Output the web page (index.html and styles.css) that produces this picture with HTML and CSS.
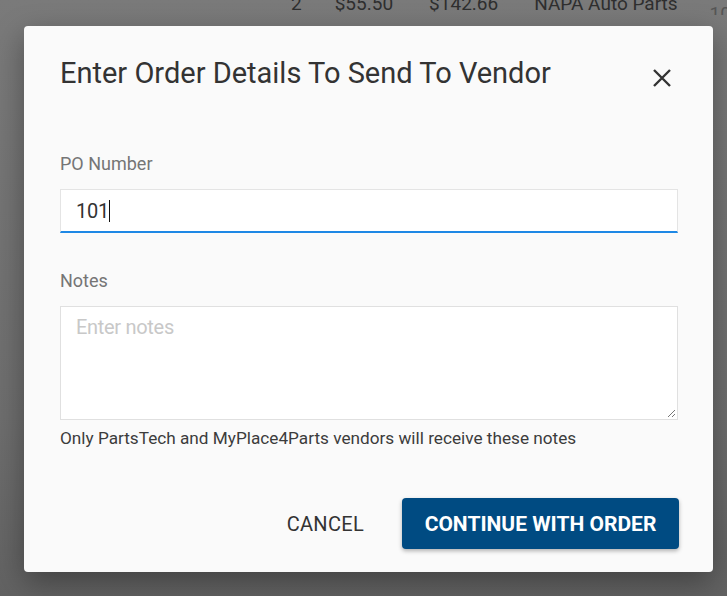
FILE: index.html
```html
<!DOCTYPE html>
<html lang="en">
<head>
  <meta charset="UTF-8" />
  <meta name="viewport" content="width=device-width, initial-scale=1.0"/>
  <title>Send Order</title>
  <link rel="stylesheet" href="styles.css">
</head>
<body>

  <!-- Page behind the overlay -->
  <div class="page-row">
    <span class="qty">2</span>
    <span class="price">$55.50</span>
    <span class="total">$142.66</span>
    <span class="vendor">NAPA Auto Parts</span>
    <span class="extra">10</span>
  </div>

  <!-- Order dialog -->
  <div class="dialog">
    <div class="dialog-header">
      <h2>Enter Order Details To Send To Vendor</h2>
      <button class="close-btn" aria-label="Close">
        <svg width="20" height="20" viewBox="0 0 20 20">
          <path d="M2 2 L18 18 M18 2 L2 18" stroke="#333" stroke-width="2.4" fill="none"/>
        </svg>
      </button>
    </div>

    <div class="field">
      <label for="poNumber">PO Number</label>
      <div class="input-box">
        <span class="input-value">101</span><span class="caret"></span>
      </div>
    </div>

    <div class="field notes-field">
      <label for="notes">Notes</label>
      <div class="textarea-box">
        <span class="placeholder">Enter notes</span>
        <svg class="grip" width="10" height="10" viewBox="0 0 10 10">
          <path d="M9 2 L2 9 M9 6 L6 9" stroke="#777" stroke-width="1" fill="none"/>
        </svg>
      </div>
      <p class="hint">Only PartsTech and MyPlace4Parts vendors will receive these notes</p>
    </div>

    <div class="actions">
      <button class="btn-cancel">CANCEL</button>
      <button class="btn-continue">CONTINUE WITH ORDER</button>
    </div>
  </div>

</body>
</html>
```

FILE: styles.css
```css
:root {
  --primary-color: #004b82;
  --focus-color: #1e88e5;
  --text-color: #333333;
  --label-color: #757575;
}

body {
  margin: 0;
  height: 596px;
  overflow: hidden;
  font-family: Roboto, 'Liberation Sans', sans-serif;
  background: linear-gradient(#7a7a7a, #6e6e6e 70%, #626262);
}

.page-row {
  display: flex;
  height: 15px;
  overflow: hidden;
  align-items: flex-end;
  font-size: 19px;
  line-height: 22px;
  color: #2e2e2e;
  white-space: nowrap;
}

.page-row span {
  display: block;
  flex-shrink: 0;
}

.qty { margin-left: 291px; }
.price { margin-left: 33px; }
.total { margin-left: 36px; }
.vendor { margin-left: 36px; }
.extra { margin-left: 32px; color: #555; margin-bottom: -10px; }

.dialog {
  width: 689px;
  height: 546px;
  margin: 11px 0 0 24px;
  box-sizing: border-box;
  padding: 0 35px 0 36px;
  background-color: #fafafa;
  border-radius: 4px;
  box-shadow: 0 10px 30px rgba(0, 0, 0, 0.35);
  display: flex;
  flex-direction: column;
}

.dialog-header {
  display: flex;
  justify-content: space-between;
  align-items: center;
  height: 94px;
}

.dialog-header h2 {
  margin: -1px 0 0;
  font-size: 29px;
  font-weight: 400;
  color: var(--text-color);
}

.close-btn {
  background: none;
  border: none;
  padding: 0;
  margin-right: 6px;
  margin-top: 10px;
  width: 20px;
  height: 20px;
  cursor: pointer;
}

.field label {
  display: block;
  font-size: 18px;
  color: var(--label-color);
  margin-top: 33px;
  line-height: 22px;
}

.input-box {
  margin-top: 14px;
  height: 44px;
  box-sizing: border-box;
  background: #fff;
  border: 1px solid #e4e4e4;
  border-bottom: 2px solid var(--focus-color);
  display: flex;
  align-items: center;
  padding-left: 15px;
}

.input-value {
  font-size: 20px;
  color: var(--text-color);
  letter-spacing: -0.3px;
}

.caret {
  display: inline-block;
  width: 1.5px;
  height: 22px;
  background: #111;
}

.notes-field label {
  margin-top: 37px;
}

.textarea-box {
  position: relative;
  margin-top: 14px;
  height: 114px;
  box-sizing: border-box;
  background: #fff;
  border: 1px solid #e0e0e0;
  padding: 8px 15px;
}

.placeholder {
  font-size: 20px;
  color: #c8c8c8;
  letter-spacing: -0.3px;
}

.grip {
  position: absolute;
  right: 1px;
  bottom: 1px;
}

.hint {
  margin: 8px 0 0;
  font-size: 17.2px;
  color: #3c3c3c;
}

.actions {
  display: flex;
  justify-content: flex-end;
  align-items: center;
  margin-top: 50px;
  gap: 38px;
}

.btn-cancel {
  background: none;
  border: none;
  font-family: inherit;
  font-size: 20px;
  font-weight: 400;
  letter-spacing: 0.3px;
  color: var(--text-color);
  cursor: pointer;
  padding: 0;
}

.btn-continue {
  width: 277px;
  height: 51px;
  background-color: var(--primary-color);
  color: #fff;
  border: none;
  border-radius: 4px;
  font-family: inherit;
  font-size: 21px;
  font-weight: 700;
  cursor: pointer;
  box-shadow: 0 2px 4px rgba(0, 0, 0, 0.3);
  margin-right: -1px;
}
```
